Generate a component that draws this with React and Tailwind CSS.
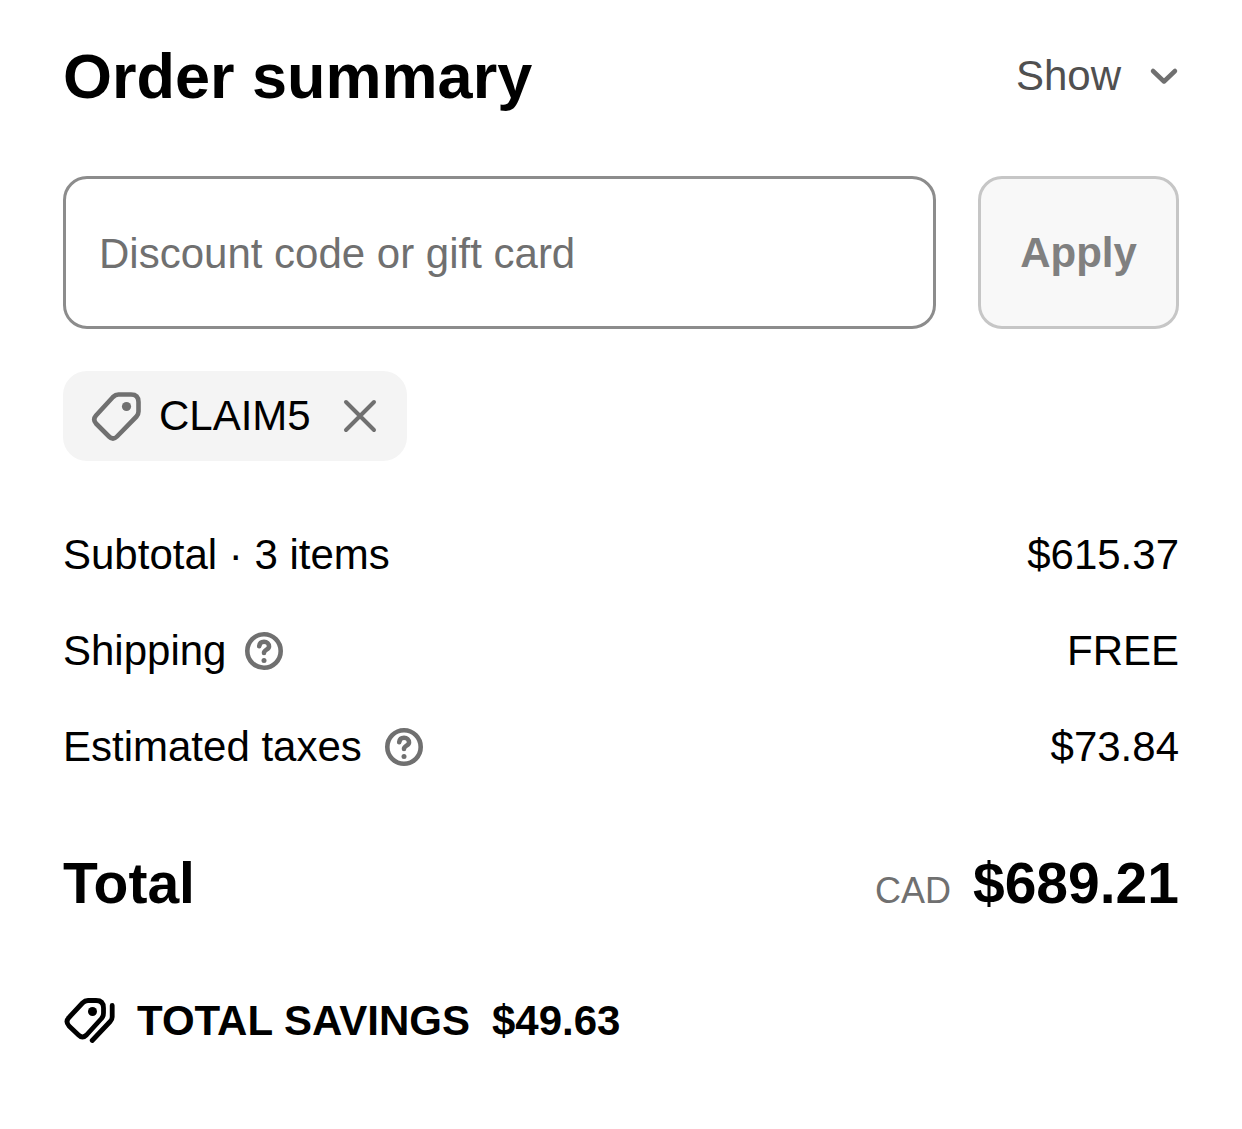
function Tag() {
  return (
    <svg className="size-[50px] shrink-0 text-[#707070]" viewBox="0 0 50 50" fill="none" stroke="currentColor" strokeWidth="4.6" strokeLinejoin="round" aria-hidden="true">
      <path d="M27.500 3.500H40Q47.500 3.500 47.500 11V20.500Q47.500 23.500 45.500 25.500L26 45.500Q22 49.500 18 45.500L5 32.500Q1.500 28.500 5 24.500L22 6Q24.500 3.500 27.500 3.500Z" />
      <circle cx="35.500" cy="15.500" r="4.600" fill="currentColor" stroke="none" />
    </svg>
  );
}

function Savings() {
  return (
    <svg className="h-[48px] w-[52px] shrink-0" viewBox="0 0 52 48" fill="none" stroke="currentColor" strokeWidth="4.8" strokeLinecap="round" strokeLinejoin="round" aria-hidden="true">
      <path d="M25 3.500H33Q40.500 3.500 40.500 11V16Q40.500 19.500 38.500 21.500L23.500 38Q19.500 42 15.500 38L6 29Q2 24.500 6 20.500L19.500 6Q22 3.500 25 3.500Z" />
      <path d="M49.200 8.500V20Q49.200 22.500 47.200 24.500L29.200 43.500" />
      <circle cx="29.500" cy="14.500" r="4.500" fill="currentColor" stroke="none" />
    </svg>
  );
}

function Help({ label }) {
  return (
    <button type="button" aria-label={label} className="shrink-0 text-[#707070]">
      <svg className="size-[40px]" viewBox="0 0 40 40" fill="none" stroke="currentColor" strokeWidth="4.600" strokeLinecap="round" strokeLinejoin="round" aria-hidden="true">
        <circle cx="20" cy="20" r="16.700" />
        <path d="M15.200 15.200C15.600 12.300 17.500 10.800 20 10.800C23 10.800 25 12.700 25 15.400C25 18.800 20 18.500 20 22" />
        <circle cx="20" cy="29.500" r="2.500" fill="currentColor" stroke="none" />
      </svg>
    </button>
  );
}

function Row({ label, value, children }) {
  return (
    <div className="flex h-12 items-center justify-between">
      <dt className="flex items-center">{label}{children}</dt>
      <dd>{value}</dd>
    </div>
  );
}

export default function App() {
  return (
    <main className="min-h-screen bg-white px-[63px] pt-10 text-[42px] leading-[48px] text-black font-['Liberation_Sans',Arial,sans-serif]">
      <header className="flex h-[72px] items-center justify-between">
        <h1 className="text-[63px] leading-[72px] font-bold">Order summary</h1>
        <button type="button" className="flex items-center gap-7 text-[#505050]">
          Show
          <svg className="h-[18px] w-[30px] text-[#707070]" viewBox="0 0 30 18" fill="none" stroke="currentColor" strokeWidth="4.500" strokeLinecap="round" strokeLinejoin="round" aria-hidden="true">
            <path d="M4 4L15 14.500L26 4" />
          </svg>
        </button>
      </header>

      <form className="mt-16 flex gap-[42px]" onSubmit={(e) => e.preventDefault()}>
        <input aria-label="Discount code or gift card" placeholder="Discount code or gift card" className="h-[153px] min-w-0 flex-1 rounded-[24px] border-3 border-[#8c8c8c] px-[33px] pt-[2px] placeholder:text-[#707070]" />
        <button className="h-[153px] w-[201px] rounded-[24px] border-3 border-[#c6c6c6] bg-[#f8f8f8] font-bold text-[#808080]">Apply</button>
      </form>

      <div className="mt-[42px] flex h-[90px] w-fit items-center rounded-[24px] bg-[#f4f4f4] px-7">
        <Tag />
        <span className="ml-[18px]">CLAIM5</span>
        <button type="button" aria-label="Remove CLAIM5" className="ml-8 text-[#707070]">
          <svg className="size-[36px]" viewBox="0 0 36 36" fill="none" stroke="currentColor" strokeWidth="4" strokeLinecap="round" aria-hidden="true">
            <path d="M3 4L31 32M31 4L3 32" />
          </svg>
        </button>
      </div>

      <dl className="mt-[70px] flex flex-col gap-12">
        <Row label="Subtotal · 3 items" value="$615.37" />
        <Row label={<span className="mr-[18px]">Shipping</span>} value="FREE"><Help label="About shipping" /></Row>
        <Row label={<span className="mr-[22px]">Estimated taxes</span>} value="$73.84"><Help label="About estimated taxes" /></Row>
      </dl>

      <div className="mt-[76px] flex items-baseline justify-between font-bold text-[57px] leading-[72px]">
        <h2>Total</h2>
        <p className="flex items-baseline gap-[22px]">
          <span className="text-[36px] font-normal text-[#707070]">CAD</span>
          <strong>$689.21</strong>
        </p>
      </div>

      <p className="mt-[70px] flex items-center font-bold">
        <Savings />
        <span className="ml-[22px]">TOTAL SAVINGS</span>
        <span className="ml-[22px]">$49.63</span>
      </p>
    </main>
  );
}
